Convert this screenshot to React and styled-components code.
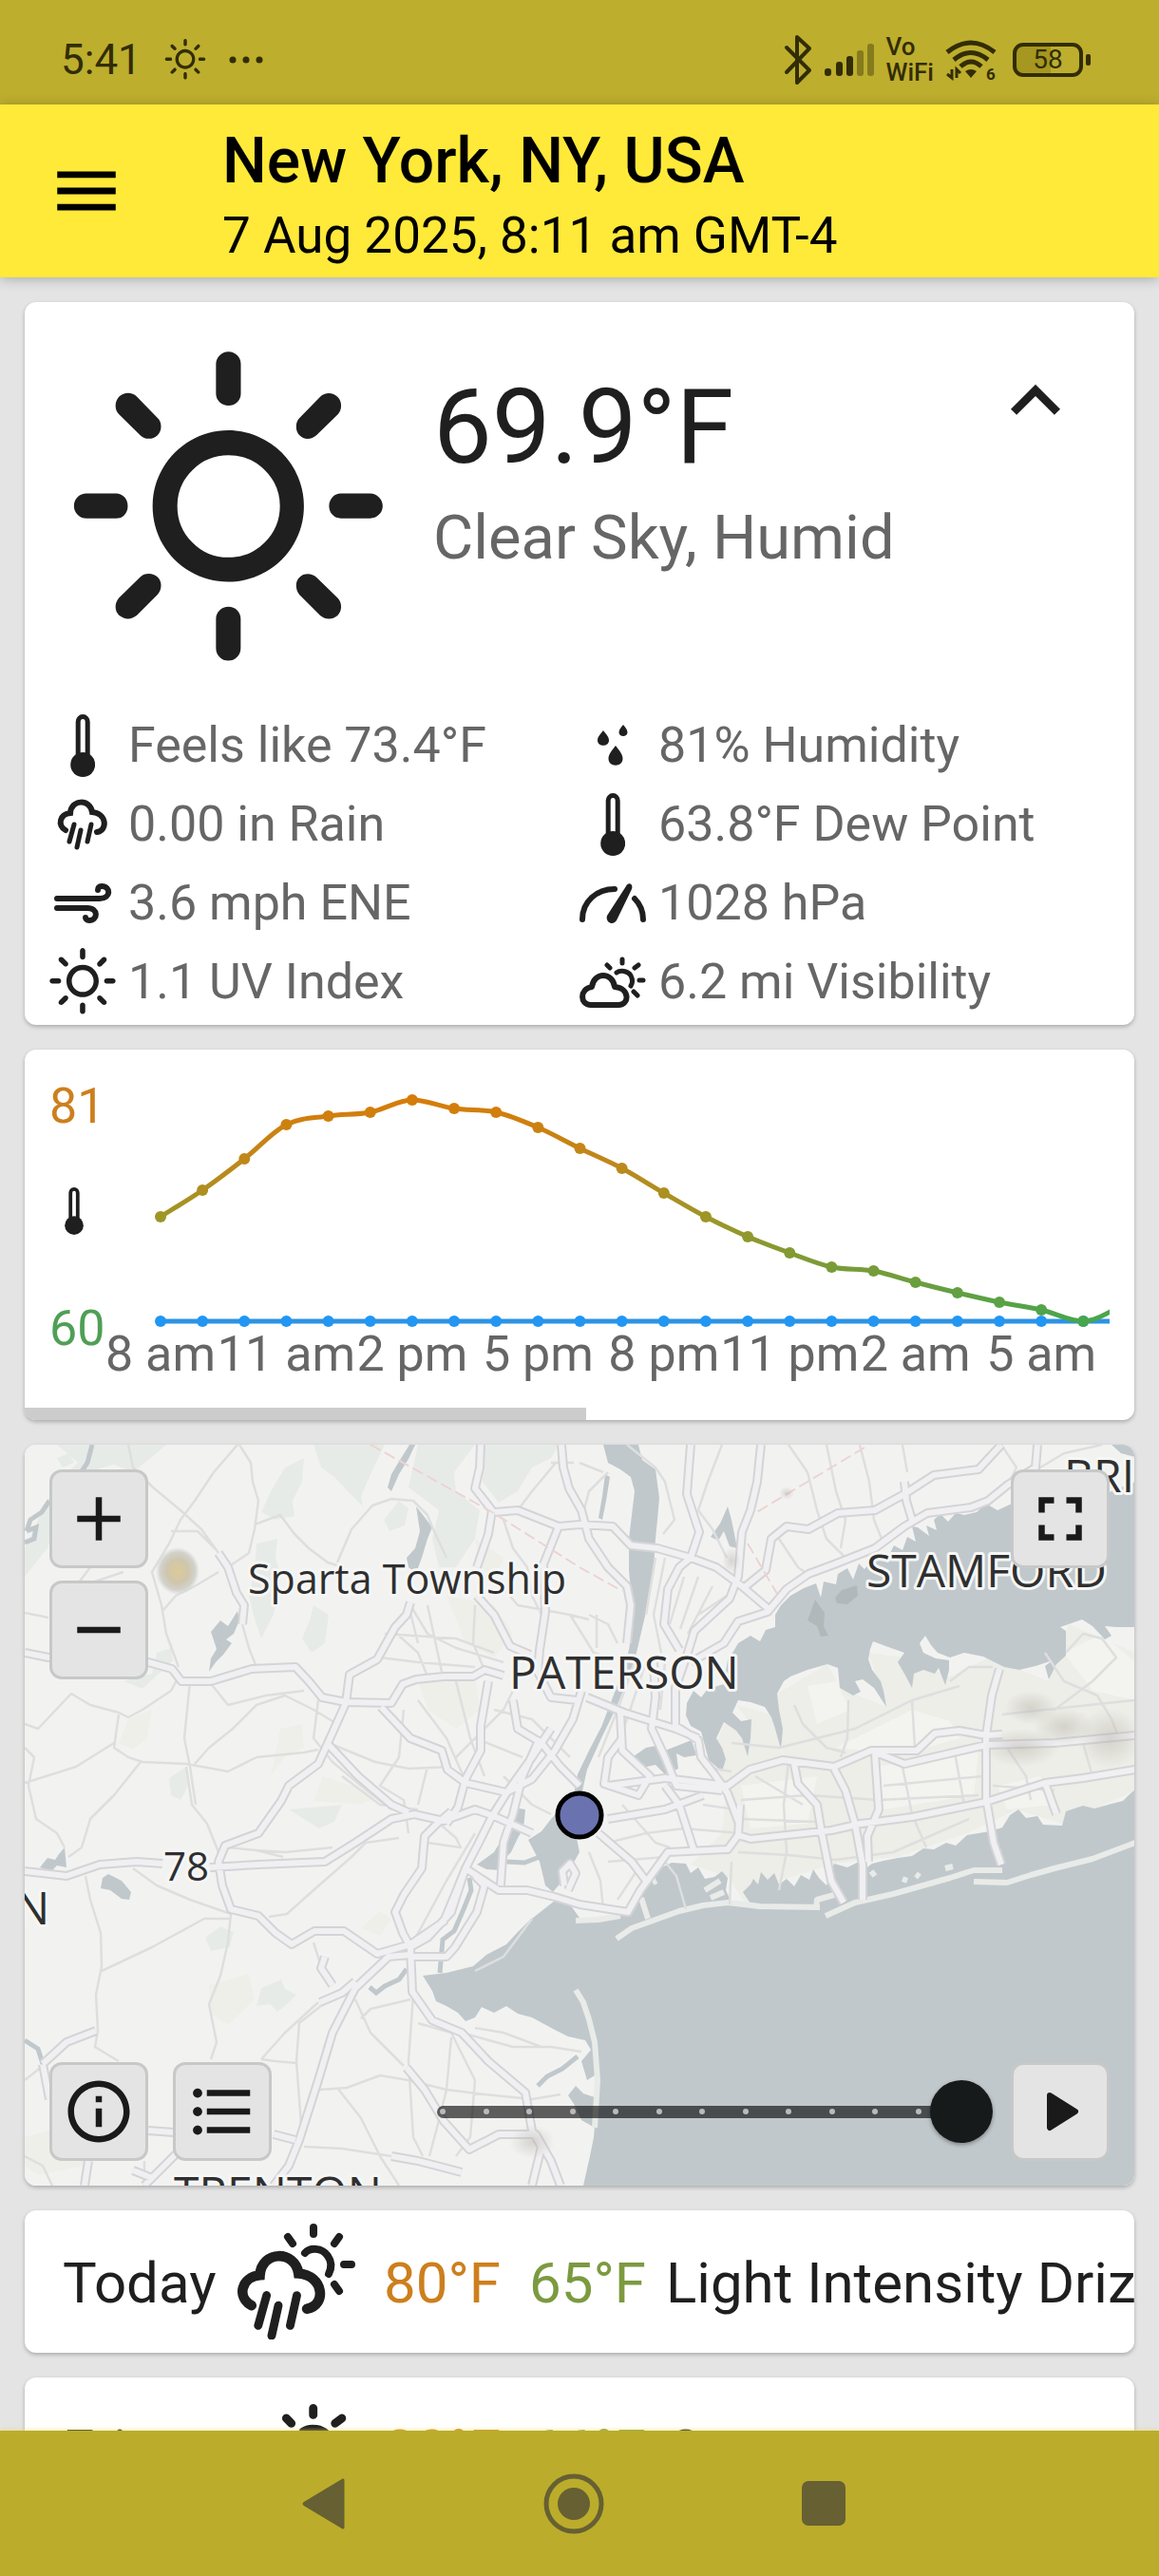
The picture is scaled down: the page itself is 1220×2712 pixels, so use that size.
import React, { useState } from "react";
import styled, { createGlobalStyle } from "styled-components";
import * as MdIcons from "react-icons/md";
import * as WiIcons from "react-icons/wi";

const GlobalStyle = createGlobalStyle`
  * {
    box-sizing: border-box;
  }
  body {
    margin: 0;
    background: #e4e4e4;
    font-family: Roboto, "Liberation Sans", sans-serif;
    color: #1f1f1f;
  }
`;

const Page = styled.div`
  display: flex;
  flex-direction: column;
  height: 100vh;
  overflow: hidden;
`;

const StatusBar = styled.div`
  flex: none;
  display: flex;
  justify-content: space-between;
  align-items: center;
  height: 110px;
  padding: 16px 72px 0 64px;
  background: #bdae2e;
  color: #322d05;
`;

const StatusGroup = styled.div`
  display: flex;
  align-items: center;
  gap: ${(p) => p.$gap}px;
`;

const Clock = styled.span`
  font-size: 44px;
  line-height: 52px;
`;

const VoWifi = styled.span`
  display: flex;
  flex-direction: column;
  font-size: 26px;
  line-height: 27px;
  font-weight: 500;
`;

const BatteryBox = styled.span`
  display: flex;
  align-items: center;
  margin-left: 5px;
`;

const Battery = styled.span`
  display: flex;
  align-items: center;
  justify-content: center;
  width: 74px;
  height: 36px;
  border: 4px solid #322d05;
  border-radius: 11px;
  background: linear-gradient(90deg, #a5971f 55%, transparent 55%);
  font-size: 28px;
  line-height: 28px;
`;

const BatteryTip = styled.span`
  width: 5px;
  height: 12px;
  margin-left: 3px;
  border-radius: 2px;
  background: #322d05;
`;

const AppBar = styled.header`
  flex: none;
  display: flex;
  align-items: center;
  gap: 102px;
  height: 182px;
  padding: 0 50px;
  background: #ffe939;
  color: #000;
  box-shadow: 0 2px 12px rgba(0, 0, 0, 0.25);
  z-index: 1;
`;

const Heading = styled.div`
  padding-top: 8px;
`;

const PlainButton = styled.button`
  display: flex;
  padding: 0;
  border: 0;
  background: none;
  color: inherit;
`;

const Title = styled.h1`
  margin: 0 0 9px;
  font-size: 66px;
  line-height: 76px;
  font-weight: 500;
`;

const Subtitle = styled.div`
  font-size: 53px;
  line-height: 62px;
`;

const Content = styled.main`
  flex: 1;
  display: flex;
  flex-direction: column;
  gap: 26px;
  min-height: 0;
  padding: 26px 26px 0;
  overflow: hidden;
`;

const Card = styled.section`
  flex: none;
  border-radius: 12px;
  background: #fff;
  overflow: hidden;
  box-shadow: 0 2px 4px rgba(0, 0, 0, 0.25);
`;

const Hero = styled.div`
  display: flex;
  height: 423px;
  padding: 0 52px 0 26px;
`;

const HeroIcon = styled.div`
  display: flex;
  align-items: center;
  justify-content: center;
  width: 376px;
  margin-right: 28px;
  padding-top: 18px;

  svg {
    flex: none;
  }
`;

const HeroText = styled.div`
  flex: 1;
  padding-top: 66px;
`;

const Temperature = styled.div`
  font-size: 110px;
  line-height: 132px;
`;

const Condition = styled.div`
  margin-top: 12px;
  font-size: 65px;
  line-height: 76px;
  color: #666;
`;

const CollapseButton = styled(PlainButton)`
  align-self: flex-start;
  margin-top: 52px;
`;

const Details = styled.ul`
  display: grid;
  grid-template-columns: 1fr 1fr;
  margin: 0;
  padding: 2px 26px 4px;
  list-style: none;
`;

const Detail = styled.li`
  display: flex;
  align-items: center;
  gap: 13px;
  height: 83px;
  font-size: 52px;
  color: #666;
`;

const DetailIcon = styled.span`
  display: flex;
  align-items: center;
  justify-content: center;
  width: 70px;
  height: 83px;
  color: #1f1f1f;

  svg {
    flex: none;
  }
`;

const ChartBody = styled.div`
  display: flex;
  gap: 1px;
  height: 377px;
  padding: 0 26px;
`;

const Axis = styled.div`
  display: flex;
  flex-direction: column;
  justify-content: space-between;
  width: 56px;
  padding: 30px 0 53px;
  font-size: 52px;
  line-height: 60px;
`;

const AxisValue = styled.span`
  color: ${(p) => p.$color};
`;

const AxisIcon = styled.span`
  display: flex;
  justify-content: center;
  width: 52px;
  padding-bottom: 14px;
`;

const ChartSvg = styled.svg`
  flex: 1;
  min-width: 0;
  height: 377px;
  font-size: 52px;
  fill: #666;
`;

const ScrollTrack = styled.div`
  height: 13px;
`;

const ScrollThumb = styled.div`
  width: 50.6%;
  height: 100%;
  background: #ccc;
`;

const MapCard = styled(Card)`
  display: grid;
  height: 780px;
`;

const MapSvg = styled.svg`
  grid-area: 1 / 1;
  width: 100%;
  height: 780px;
  background: #f2f3f1;
  font-family: "Open Sans", "Noto Sans", sans-serif;
`;

const MapControls = styled.div`
  grid-area: 1 / 1;
  display: flex;
  flex-direction: column;
  justify-content: space-between;
  padding: 26px;
  z-index: 1;
`;

const ControlRow = styled.div`
  display: flex;
  justify-content: space-between;
  align-items: ${(p) => p.$align || "center"};
`;

const ButtonStack = styled.div`
  display: flex;
  flex-direction: ${(p) => (p.$vertical ? "column" : "row")};
  gap: ${(p) => (p.$vertical ? 13 : 26)}px;
`;

const MapButton = styled.button`
  display: flex;
  align-items: center;
  justify-content: center;
  width: 104px;
  height: 104px;
  padding: 0;
  border: 3px solid #c7c8c8;
  border-radius: 13px;
  background: #e4e4e4;
  color: #1a1a1a;
`;

const Slider = styled.div`
  display: grid;
  align-items: center;
  flex: 1;
  margin: 0 19px 0 147px;
`;

const SliderDots = styled.div`
  grid-area: 1 / 1;
  display: flex;
  align-items: center;
  justify-content: space-between;
  height: 13px;
  margin: 0 27px;
  padding: 0 3px;
  border-radius: 7px;
  background: rgba(0, 0, 0, 0.62);
`;

const SliderDot = styled.span`
  width: 6px;
  height: 6px;
  border-radius: 50%;
  background: #b9bcbe;
`;

const SliderInput = styled.input`
  grid-area: 1 / 1;
  width: 100%;
  height: 66px;
  margin: 0;
  appearance: none;
  background: transparent;

  &::-webkit-slider-thumb {
    appearance: none;
    width: 66px;
    height: 66px;
    border-radius: 50%;
    background: #171a1a;
    box-shadow: 0 2px 4px rgba(0, 0, 0, 0.35);
  }
`;

const DayRow = styled.div`
  display: flex;
  align-items: center;
  height: 150px;
  padding: 0 0 0 40px;
  font-size: 60px;
  line-height: 70px;
  white-space: nowrap;

  > span {
    flex: none;
  }
`;

const DayName = styled.span`
  width: 160px;
  padding-top: 4px;
`;

const DayIcon = styled.span`
  display: flex;
  align-items: center;
  justify-content: center;
  width: 172px;
  margin-right: 6px;
`;

const DayTemp = styled.span`
  width: ${(p) => p.$width}px;
  padding-top: 4px;
  color: ${(p) => p.$color};
`;

const DayText = styled.span`
  padding-top: 4px;
`;

const NavBar = styled.nav`
  flex: none;
  display: flex;
  align-items: center;
  justify-content: center;
  gap: 208px;
  height: 153px;
  padding-right: 12px;
  background: #bbac2b;
  color: #666033;
  box-shadow: 0 -1px 4px rgba(230, 220, 100, 0.6);
  z-index: 1;
`;

const ThermometerIcon = ({ height }) => (
  <svg width={height * 0.4} height={height} viewBox="0 0 26 66" aria-hidden="true">
    <path
      d="M8 44V8a5 5.500 0 0 1 10 0V44"
      fill="none"
      stroke="currentColor"
      strokeWidth="5"
    />
    <circle cx="13" cy="53" r="13" fill="currentColor" />
  </svg>
);

const GaugeIcon = () => (
  <svg width="70" height="42" viewBox="0 14 70 42" aria-hidden="true">
    <g fill="none" stroke="currentColor" strokeWidth="6" strokeLinecap="round">
      <path d="M3 52C3 33 18 20 37 20" />
      <path d="M58 30C64 36 67 43 67 52" />
    </g>
    <path
      d="M49 17C51 12 57 14 55 20L39 53C35 59 27 55 29 48Z"
      fill="currentColor"
    />
  </svg>
);

const WindIcon = () => (
  <svg width="62" height="42" viewBox="0 0 62 42" aria-hidden="true">
    <path
      d="M4 16H49C61 16 61 3 51 3C48 3 47 5 47 7M4 26H36C48 26 47 39 38 39C35 39 34 37 34 36"
      fill="none"
      stroke="currentColor"
      strokeWidth="6"
      strokeLinecap="round"
    />
  </svg>
);

// teardrop with its tip at (x, y)
const drop = (x, y, w, h) =>
  `M${x} ${y}C${x + w * 0.2} ${y + h * 0.2} ${x + w / 2} ${y + h * 0.4} ${x + w / 2} ${
    y + h * 0.66
  }C${x + w / 2} ${y + h * 1.1} ${x - w / 2} ${y + h * 1.1} ${x - w / 2} ${
    y + h * 0.66
  }C${x - w / 2} ${y + h * 0.4} ${x - w * 0.2} ${y + h * 0.2} ${x} ${y}Z`;

const HumidityIcon = () => (
  <svg width="32" height="44" viewBox="0 0 32 44" aria-hidden="true">
    <path
      d={drop(6, 6, 12, 16) + drop(27, 0, 9, 12) + drop(19, 22, 15, 21)}
      fill="currentColor"
    />
  </svg>
);

const rainCloud = "M10 34C1 29 4 17 15 16C16 1 36 1 38 15C53 16 55 34 43 36";
const rainStreaks = "M19 28L14 46M26 34L22 52M37 28L33 46";

const RainIcon = () => (
  <svg width="56" height="56" viewBox="0 0 56 56" aria-hidden="true">
    <g fill="none" stroke="currentColor" strokeLinecap="round">
      <path d={rainCloud} strokeWidth="6" />
      <path d={rainStreaks} strokeWidth="5" />
    </g>
  </svg>
);

const DayRainIcon = () => (
  <svg width="124" height="122" viewBox="0 0 124 122" aria-hidden="true">
    <g fill="none" stroke="currentColor" strokeLinecap="round">
      <path
        d="M71 31C76 25 89 25 95 34C100 41 99 47 96 53M80 4V11M53 14L58 21M107 14L102 21M112 43H120M102 64L107 71"
        strokeWidth="8"
      />
      <g transform="translate(-3 26) scale(1.77)">
        <path d={rainCloud} strokeWidth="6" />
        <path d={rainStreaks} strokeWidth="5" />
      </g>
    </g>
  </svg>
);

const DayCloudIcon = ({ width }) => (
  <svg width={width} viewBox="0 0 70 54" aria-hidden="true">
    <g fill="none" stroke="currentColor" strokeLinecap="round" strokeLinejoin="round">
      <path
        d="M12 51C0 51 0 34 13 32C15 16 35 16 37 32C53 33 53 51 41 51Z"
        strokeWidth="6"
      />
      <path
        d="M39 17C43 14 51 15 54 20C56 24 56 28 54 31M45 3V7M29 9L32 12M62 9L58 12M63 25H67M57 37L61 41"
        strokeWidth="5"
      />
    </g>
  </svg>
);

const details = [
  { icon: <ThermometerIcon height={66} />, text: "Feels like 73.4°F" },
  { icon: <HumidityIcon />, text: "81% Humidity" },
  { icon: <RainIcon />, text: "0.00 in Rain" },
  { icon: <ThermometerIcon height={66} />, text: "63.8°F Dew Point" },
  { icon: <WindIcon />, text: "3.6 mph ENE" },
  { icon: <GaugeIcon />, text: "1028 hPa" },
  { icon: <WiIcons.WiDaySunny size={98} />, text: "1.1 UV Index" },
  { icon: <DayCloudIcon width={70} />, text: "6.2 mi Visibility" },
];

const temps = [
  176, 148, 115, 79, 70, 66, 53, 62, 66, 82, 104, 125, 151, 176, 197, 214, 229,
  233, 245, 256, 266, 274, 286, 268,
];
const hours = ["8 am", "11 am", "2 pm", "5 pm", "8 pm", "11 pm", "2 am", "5 am"];
const hourX = (i) => 60 + i * 44.15;

// smooth line through all points, tangents follow the neighbours
const linePath = (ys) =>
  ys.reduce((d, y, i) => {
    if (i === 0) return `M${hourX(0)} ${y}`;
    const slope = (k) => {
      if (k === 0 || k === ys.length - 1) return 0;
      const a = ys[k] - ys[k - 1];
      const b = ys[k + 1] - ys[k];
      return a * b <= 0 ? 0 : (a + b) / 2;
    };
    const s0 = i === 1 ? y - ys[0] : slope(i - 1);
    const s1 = i === ys.length - 1 ? y - ys[i - 1] : slope(i);
    return `${d}C${hourX(i - 1) + 14.7} ${ys[i - 1] + s0 / 3} ${hourX(i) - 14.7} ${
      y - s1 / 3
    } ${hourX(i)} ${y}`;
  }, "");

const HourlyChart = () => (
  <ChartSvg role="img" aria-label="Hourly temperature">
    <defs>
      <linearGradient id="heat" gradientUnits="userSpaceOnUse" x1="0" y1="53" x2="0" y2="286">
        <stop offset="0" stopColor="#d67c08" />
        <stop offset="0.25" stopColor="#c2861a" />
        <stop offset="0.53" stopColor="#9e9626" />
        <stop offset="0.78" stopColor="#759c3a" />
        <stop offset="1" stopColor="#46a64e" />
      </linearGradient>
    </defs>
    <line x1={hourX(0)} x2="1200" y1="286" y2="286" stroke="#2d93e3" strokeWidth="5" />
    {temps.map((t, i) => (
      <circle key={i} cx={hourX(i)} cy="286" r="6" fill="#2196f3" />
    ))}
    <path d={linePath(temps)} fill="none" stroke="url(#heat)" strokeWidth="5" />
    <g fill="url(#heat)">
      {temps.map((t, i) => (
        <circle key={i} cx={hourX(i)} cy={t} r="6" />
      ))}
    </g>
    {hours.map((hour, i) => (
      <text key={hour} x={hourX(i * 3)} y="338" textAnchor="middle">
        {hour}
      </text>
    ))}
  </ChartSvg>
);

const water = [
  // ocean and lower bay
  "M445 2080L470 2077L498 2070L512 2058L533 2047L545 2034L556 2023L570 2012L584 2001L600 2005L610 2019L630 2022L653 2016L668 2011L674 1995L680 1980L688 1970L707 1961L722 1962L727 1972L735 1966L742 1978L752 1976L760 1970L766 1977L764 1990L770 2003L790 2004L782 1992L790 1984L793 1978L798 1984L801 1971L808 1979L815 1972L820 1984L828 1978L836 1986L843 1974L852 1979L856 1968L862 1977L870 1985L878 1962L892 1966L904 1960L910 1968L918 1962L930 1959L945 1956L960 1954L972 1946L983 1947L996 1940L1006 1943L1018 1932L1030 1930L1042 1928L1055 1924L1063 1911L1072 1905L1080 1914L1092 1912L1098 1921L1118 1922L1122 1907L1140 1901L1152 1904L1170 1899L1182 1896L1188 1890L1195 1884V2301H614L621 2270L625 2250L629 2200V2183L618 2190L612 2170L622 2158L616 2148L598 2144L584 2137L560 2124L545 2120L533 2112L520 2119L507 2113L500 2124L490 2128L482 2119L470 2112L459 2107L455 2096Z",
  // long island sound
  "M1195 1560L1150 1578L1100 1580L1065 1583L1050 1590L1038 1583L1028 1592L1015 1595L1006 1593L998 1602L990 1594L983 1600L986 1611L975 1606L978 1617L966 1608L960 1607L964 1623L955 1618L950 1632L941 1627L933 1643L920 1640L910 1652L904 1646L898 1663L892 1651L882 1657L880 1668L867 1665L864 1682L859 1667L846 1672L832 1680L822 1690L816 1700V1713L806 1716L800 1728L790 1722L777 1730L770 1742L766 1747L764 1760L762 1773L745 1778L738 1787L730 1780L723 1793L722 1806L727 1817L738 1823L742 1838L746 1853L760 1865L764 1852L760 1840L754 1830L762 1813L775 1822L781 1830L787 1849L790 1830L791 1810L780 1812L771 1803L777 1790L790 1792L805 1797L812 1808L816 1820L822 1842L824 1820L820 1800L818 1783L825 1770L832 1765L850 1758L871 1752L882 1756L884 1777L898 1785L906 1781L900 1770L908 1768L920 1777L933 1797L930 1780L927 1770L918 1758L914 1747L916 1736L919 1728L935 1734L952 1740L945 1750L952 1762L960 1777L962 1762L972 1758L984 1762L988 1756L995 1774L999 1758V1748L985 1746L972 1740L968 1730L974 1722L980 1732L987 1740L1000 1745L1015 1740L1035 1744L1057 1755L1073 1758L1090 1754L1108 1748L1100 1754L1104 1768L1112 1752L1122 1743V1717L1116 1713L1139 1705L1150 1712L1163 1726L1170 1722L1163 1712L1175 1713L1195 1713Z",
  // hudson
  "M635 1521H672L676 1537L690 1547L694 1577L692 1600L690 1620L688 1653L680 1697L670 1740L660 1770L649 1797L633 1830L618 1863L612 1890H604L608 1868L620 1843L633 1818L645 1787L655 1760L662 1737L668 1697L664 1675L662 1653V1620L665 1595L668 1570L664 1555L653 1547L640 1540Z",
  // upper bay, newark bay
  "M600 1895L606 1930L610 1950L600 1968L592 1980L582 1992L574 1985L568 1960L556 1937L570 1928L580 1915Z",
  "M541 1903L553 1905L551 1925L545 1935L538 1950L533 1955L527 1969L512 1968L502 1963L520 1950L532 1930L541 1918Z",
  // inlets by the airport
  "M664 1851L680 1840L690 1838L700 1843L728 1832L733 1848L720 1850L712 1846L714 1862L700 1868L690 1858L676 1861L668 1857Z",
  // reservoirs and lakes
  "M431 1521H437L430 1536L420 1552L412 1570L408 1566L412 1552L421 1537Z",
  "M438 1586L446 1596L455 1608L450 1620L444 1640L438 1656L430 1650L428 1640L437 1630L442 1612Z",
  "M250 1696L252 1706L246 1720L238 1726L244 1730L235 1742L227 1750L220 1760L222 1746L228 1736L222 1718L232 1706L240 1712Z",
  "M108 1977L114 1973L128 1980L138 1992L136 2000L128 1999L116 1990L106 1988Z",
  "M42 1966L50 1956L58 1958L62 1952L68 1945L70 1966L60 1964L54 1970Z",
  "M766 1586L770 1600L774 1620L776 1630L768 1628L762 1612L756 1622L748 1618L758 1604Z",
  "M637 1552L642 1555L638 1580L634 1600L630 1598L634 1575Z",
  "M1170 1521H1195V1534L1180 1530Z",
  "M598 2206L606 2196L614 2204L626 2208V2240L612 2232L604 2215Z",
];

const rivers = [
  "M97 1521L92 1540L84 1552M52 1580L44 1592L32 1600L28 1612M28 1612L38 1608L36 1620L26 1624",
  "M494 1977L496 1990L488 2010L478 2033L466 2042L463 2077",
  "M428 2073L420 2084L405 2091L396 2098L389 2092",
  "M533 1960L552 1961L568 1955",
  "M26 2148L40 2157L46 2176L52 2205",
  "M608 2165L592 2178L576 2186L566 2196",
];

const parks = [
  "M60 1521H175L160 1534L140 1550L120 1542L98 1548L80 1575L60 1600L50 1630L30 1655L26 1660V1630L40 1600L60 1560L82 1540Z",
  "M330 1521H405L392 1548L380 1575L382 1586L366 1570L352 1555L338 1545Z",
  "M440 1521H500L478 1550L480 1570L505 1590L500 1620L480 1650L462 1650L455 1620L462 1590L430 1566Z",
  "M510 1521H588L580 1535L560 1545L545 1570L525 1582L508 1560Z",
  "M300 1545L320 1535L318 1560L308 1580L310 1596L290 1600L275 1592L285 1570Z",
  "M270 1625L292 1620L290 1640L296 1660L288 1700L275 1725L268 1705L262 1680L268 1650Z",
  "M330 1690L346 1700L342 1730L328 1740L318 1725L326 1706Z",
  "M404 1600L420 1580L430 1588L426 1606L410 1612Z",
  "M304 1905L360 1900L352 1918L336 1925L318 1914Z",
  "M216 2040L232 2028L246 2034L242 2050L222 2054Z",
  "M275 2093L296 2084L300 2094L312 2100L302 2110L292 2118L284 2110L270 2112Z",
  "M130 1770L160 1762L165 1740L180 1735L182 1748L150 1778Z",
  "M178 1872L196 1860L198 1880L190 1895L180 1890Z",
  "M60 1535L72 1530L78 1540L66 1545Z",
];

const suburbs = [
  "M135 1810L160 1800L155 1830L140 1842L125 1835Z",
  "M295 1820L318 1815L320 1840L300 1850L285 1870Z",
  "M470 1680L520 1690L540 1720L520 1745L490 1730Z",
  "M500 1620L530 1640L522 1660L505 1650Z",
  "M220 2090L262 2078L268 2105L240 2132L222 2120Z",
  "M380 2030L400 2012L412 2020L400 2038Z",
  "M440 1770L500 1765L505 1800L480 1820L450 1800Z",
  "M340 1870L400 1890L380 1900L330 1896Z",
  "M26 2250L60 2240L100 2260L90 2280L40 2290L26 2280Z",
];

const island =
  "M746 1856L762 1815L790 1815L775 1795L812 1805L824 1850L818 1783L871 1752L884 1777L933 1797L914 1740L952 1745L1000 1765L1040 1745L1104 1770L1125 1710L1195 1740V1885L1118 1920L1070 1905L1018 1930L945 1955L878 1962L820 1980L785 2005L766 1975L727 1963L760 1930L765 1880Z";

const islandLight = [
  "M880 1840L960 1800L1000 1812L1010 1830L940 1850L900 1842Z",
  "M1120 1740L1160 1720L1195 1750V1790L1150 1780Z",
  "M780 1880L860 1870L850 1920L790 1925Z",
  "M920 1860L1030 1845L1025 1890L930 1905Z",
  "M1050 1880L1095 1870L1110 1900L1060 1905Z",
  "M850 1775L880 1770L895 1800L860 1815Z",
];

const highways = [
  "M26 1740L51 1745L156 1750L181 1757L191 1770L222 1770L265 1757L311 1755L325 1770L339 1787L364 1792L412 1793L424 1773L438 1768L467 1765L498 1765L510 1758L530 1764",
  "M432 1687L428 1700L416 1713L397 1747L368 1763L364 1793L346 1833L335 1857L304 1880L296 1896L272 1930L237 1943L230 1960L234 1985L243 2010L272 2017L290 2035L307 2047L331 2033L362 2033L397 2057L432 2047L467 2023L480 1992L490 1967L504 1940L518 1912L535 1885L560 1850L580 1820",
  "M230 1635L240 1650L249 1677L257 1690L255 1710",
  "M506 1521L505 1545L500 1567L518 1590L514 1615L502 1650",
  "M502 1680L520 1700L537 1733L558 1742",
  "M591 1521L593 1545L599 1567L612 1590L620 1620L640 1650L660 1670L664 1690L660 1730",
  "M521 1592L545 1590L588 1607L610 1605L645 1607L664 1627L692 1630L727 1640L754 1650L781 1670L808 1693",
  "M588 1607L572 1647L574 1697L568 1737L566 1760L580 1787L607 1790",
  "M727 1521L723 1573L736 1613L727 1640L715 1650L703 1673L699 1710L715 1737",
  "M801 1521L797 1560L790 1590L781 1613L777 1660L768 1683L731 1717L723 1743L711 1777V1817L735 1832L738 1850L752 1868L766 1888L778 1920",
  "M1054 1521L1030 1547L983 1553L952 1573L921 1590L882 1593L851 1610L828 1607L812 1620L806 1653L785 1670",
  "M1092 1521L1090 1545L1061 1563L1040 1580L1022 1587L976 1593L952 1607L921 1630L878 1647L851 1657L828 1673L808 1697L777 1707L762 1730L727 1750",
  "M952 1560L954 1580L960 1600",
  "M401 1797L432 1830L465 1843L471 1863L490 1877L533 1887L560 1873L584 1843L603 1810L612 1780",
  "M346 1837L377 1870L412 1900L430 1908",
  "M514 1770L506 1817V1843L490 1873L482 1903L470 1920",
  "M26 1970L70 1975L105 1963L144 1960L171 1962M221 1966L272 1963L342 1960L374 1940L412 1915L436 1910L467 1917L500 1905L520 1912L560 1930",
  "M475 1907L460 1920L447 1933L444 1967L425 1995L416 2013L424 2035L432 2050L434 2097L455 2127L486 2140L514 2170L553 2203L560 2243L570 2260L560 2301",
  "M432 2058L409 2060L374 2093L350 2140L335 2190L315 2253L304 2280L288 2301",
  "M490 1967L475 2013L450 2040L432 2050",
  "M500 1975L510 1985L502 2013L479 2050L470 2060L432 2060",
  "M490 1967L525 1990L555 1990L584 1997L610 2005L661 2013L674 1990L690 1968L703 1950L766 1947L777 1932L790 1936L828 1932L875 1927L906 1920L960 1913L999 1905L1038 1897L1100 1877L1140 1872L1195 1863",
  "M640 1880L700 1872L766 1880L789 1863L824 1853L878 1860L917 1843L952 1857L1038 1837L1110 1835L1195 1827",
  "M917 1843L965 1843L984 1825L1010 1822L1038 1827L1055 1826",
  "M1052 1757L1044 1785L1038 1827V1893L1046 1940L1054 1963",
  "M836 1857L840 1878L860 1900L865 1930L875 1980L888 2003",
  "M878 1862L890 1885L900 1920L908 1963V2000",
  "M921 1847L925 1905L913 1933L914 1960",
  "M700 1880L715 1900L731 1950M779 1900L777 1932",
  "M1100 1877L1112 1910",
  "M618 1787L657 1803L711 1820L735 1830M653 1803L655 1843L684 1870L672 1890L636 1878L640 1850L655 1830",
  "M688 1750L690 1787L686 1820L700 1850L712 1880L760 1885",
  "M540 1790L545 1820L570 1835L590 1860L610 1880M568 1830L550 1870L540 1910L530 1940L527 1985",
  "M45 2173L70 2150L101 2138M45 2173L52 2210",
  "M156 2243L183 2245M288 2247L311 2253M89 2301L93 2275M160 2293L183 2270L194 2260M152 2301L160 2293L140 2285",
  "M412 2270L440 2275L486 2287",
  "M428 2177L447 2200L467 2233L494 2263L525 2247L564 2247L580 2275L590 2301",
  "M337 2108L360 2098L374 2086M342 2060L338 2072L350 2090",
  "M594 1985L592 1970L600 1962L606 1972L598 1990",
  "M640 1915L700 1905L740 1890M630 1930L665 1960L680 1980",
];

const roads = [
  "M250 1521L225 1550L205 1580L190 1600L178 1625L160 1655L170 1690L175 1720L188 1755",
  "M135 1521L140 1545L160 1565L190 1590L212 1610L230 1635",
  "M180 1612L208 1612L228 1632",
  "M252 1521L264 1540L266 1560L272 1580L268 1610L262 1635L240 1650",
  "M268 1605L295 1595L310 1615L325 1630L345 1645L355 1648",
  "M355 1645L370 1610L392 1585L412 1578L435 1580L450 1595L456 1610L470 1640",
  "M255 1710L262 1735L270 1755M230 1655L205 1670L185 1680L172 1695",
  "M26 1698L51 1703M95 1650L80 1670L100 1665L130 1655",
  "M26 1815L40 1820L75 1783L95 1795L125 1803L135 1808L150 1800L180 1780L188 1765",
  "M125 1805L120 1840L135 1850L150 1855L196 1857L240 1865L270 1850L320 1845L335 1842",
  "M205 1857L220 1840L245 1820L270 1795L300 1785L330 1800L355 1815",
  "M200 1770L194 1830L200 1860L206 1900M26 1840L36 1850L30 1880L38 1915L60 1930L68 1945",
  "M148 1855L120 1890L95 1915L86 1945L72 1955M26 1877L80 1860L120 1835",
  "M196 1860L202 1900L218 1920L230 1950M220 1770L240 1795L280 1785L320 1780",
  "M335 1790L330 1830L350 1855L380 1880L412 1905M346 1835L395 1855L430 1862L475 1860",
  "M412 1715L440 1740L450 1765M432 1690L450 1720L480 1735L530 1750M500 1690L498 1730L510 1758",
  "M440 1790L470 1830L490 1875M480 1770L495 1830L510 1870M425 1800L420 1850L400 1880L425 1895L430 1930",
  "M140 1967L165 1985L200 2000L243 2015L240 2045L232 2080L220 2110L228 2150L222 2168",
  "M243 2020L215 2020L160 2050L107 2075M90 1975L95 2000L106 2035L107 2070L101 2100L103 2138L100 2155L125 2170",
  "M283 2018L302 2015L330 1990L370 1955L385 1940L420 1935",
  "M240 1945L270 1948L300 1950L350 1945M270 1948L298 1955",
  "M275 2168L300 2140L335 2108M318 2250L312 2170L315 2130L340 2110M275 2168L290 2170L312 2172",
  "M374 2105L390 2140L425 2175M380 2125L390 2115L432 2105M435 2100L430 2170L435 2250L445 2270",
  "M440 2130L475 2140L500 2190L495 2250L480 2270M486 2140L540 2155L580 2155L612 2160",
  "M500 2135L530 2140L570 2155M336 2200L365 2198L400 2185L430 2190L470 2200L510 2205L560 2210L590 2205",
  "M355 2198L380 2230L400 2270L420 2301M320 2260L360 2262L412 2270M475 2145L470 2200L460 2240L452 2270",
  "M26 2190L45 2175M26 2270L45 2280L55 2301M152 2275L152 2301",
  "M330 2045L338 2070M432 2050L470 1980L500 1930M450 1940L485 1945L480 1935L465 1922",
  "M500 2075L530 2060L560 2020M585 1540L560 1570L545 1590M604 1540L580 1540",
  "M530 1600L540 1630L555 1650L560 1680L570 1700M520 1660L545 1690L600 1700L620 1705",
  "M610 1540L635 1550M612 1600L620 1570L640 1550M660 1521L690 1545L700 1560L710 1600L698 1615",
  "M760 1521L745 1560L735 1590L750 1610L765 1640M830 1521L850 1550L860 1590L870 1620L890 1640",
  "M870 1521L880 1570L890 1600L885 1630M905 1521L915 1560L920 1600L930 1625M950 1521L955 1550",
  "M1054 1521L1070 1545L1060 1565M820 1620L840 1650L850 1657M1090 1548L1120 1530L1160 1521",
  "M690 1640L680 1700M700 1640L688 1700L696 1740M720 1660L705 1710M735 1660L716 1715M750 1670L724 1720M765 1680L735 1700",
  "M620 1700L640 1710L650 1730M600 1700L625 1740L640 1745M628 1700V1735M670 1745L650 1800L630 1850M680 1750L660 1810L640 1860M700 1750L695 1800",
  "M836 1795L845 1815L870 1840L890 1845M893 1790L892 1830L885 1850M770 1835L820 1840L900 1820L960 1790L1010 1775",
  "M960 1790L963 1840M1055 1805L1100 1800L1195 1790M1100 1740L1120 1770L1155 1785L1170 1810L1178 1830",
  "M1122 1740L1140 1720L1160 1725L1175 1745L1150 1770L1110 1800M1000 1770L1020 1755L1045 1755",
  "M780 1895L850 1890L925 1895L1030 1890M780 1915L860 1918M777 1950L830 1953L880 1958L940 1950L1020 1915",
  "M950 1860L960 1910L975 1945M1005 1845L1015 1900M1060 1840L1080 1870L1085 1895M1140 1835L1150 1870",
  "M830 1855L825 1900L828 1950L820 1990M770 1960L768 2005M700 1960L712 1975L722 2010",
  "M640 1940L680 1930L720 1925L780 1930M640 1960L700 1955M655 1900L690 1940L705 1945M620 1950L632 1980L635 2010",
  "M670 1970L650 2000M740 1860L770 1865M740 1900L775 1905M795 1870L845 1900M930 1880L1035 1870M1045 1880L1110 1885",
  "M500 1830L550 1850M480 1850L530 1800L540 1780M520 1800L560 1810L600 1850M450 1860L440 1900M530 1870L560 1900L580 1910",
  "M400 1745L440 1750L500 1755M405 1720L480 1725L520 1740M430 1690L440 1730M450 1690L465 1760M360 1870L400 1900L440 1905",
];

const beaches = [
  "M649 2041L665 2030L690 2021L715 2012L740 2006L766 2003L800 2007L863 2008",
  "M869 2017L900 2003L940 1994L1000 1977L1025 1969L1055 1969",
  "M1025 1981L1060 1982L1085 1974L1110 1967L1150 1957L1195 1940",
  "M606 2095L614 2108L620 2126L626 2150L629 2190L626 2240",
  "M606 2022L630 2021L653 2017M675 1998L682 2020M859 2010L860 2000L878 1995",
  "M917 1970L921 1975M950 1978L955 1980M964 1973L968 1976M995 1967L1003 1965M687 1982L691 1980M742 1990L758 1980M748 1998L762 1992",
];

const MapDrawing = () => (
  <MapSvg
    viewBox="26 1521 1168 780"
    preserveAspectRatio="xMidYMid slice"
    role="img"
    aria-label="Rain radar map around New York"
  >
    <defs>
      <radialGradient id="shower">
        <stop offset="0" stopColor="#dccb98" />
        <stop offset="0.5" stopColor="#cfc6ad" />
        <stop offset="0.8" stopColor="#d2d2cc" />
        <stop offset="1" stopColor="#d2d2cc" stopOpacity="0" />
      </radialGradient>
      <radialGradient id="drizzle">
        <stop offset="0" stopColor="#b5afa8" stopOpacity="0.45" />
        <stop offset="1" stopColor="#b5afa8" stopOpacity="0" />
      </radialGradient>
    </defs>
    <path d={island} fill="#eceee7" />
    <path d={islandLight.join("")} fill="#f3f4ef" />
    <path d={parks.join("")} fill="#e7ebe8" />
    <path d={suburbs.join("")} fill="#eeefe9" />
    <path d={water.join("")} fill="#c0c8cc" />
    <path d={rivers.join("")} fill="none" stroke="#c0c8cc" strokeWidth="5" />
    <g fill="none" strokeLinejoin="round">
      <path d={beaches.join("")} stroke="#e9ebe8" strokeWidth="6" />
      <path d={roads.join("")} stroke="#dededf" strokeWidth="2.5" />
      <path d={highways.join("")} stroke="#d4d4d7" strokeWidth="10" />
      <path d={highways.join("")} stroke="#f0f0f2" strokeWidth="6" />
      <path
        d="M390 1521L518 1592L610 1650L655 1675M910 1524L795 1593M787 1625L818 1678"
        stroke="#edd3d2"
        strokeWidth="2"
        strokeDasharray="12 5"
      />
    </g>
    <ellipse cx="187" cy="1654" rx="23" ry="25" fill="url(#shower)" />
    <path d="M850 1706L858 1684L868 1698L867 1712L872 1722L864 1723L860 1712Z" fill="#b2b8b9" />
    <path d="M879 1682L886 1674L902 1669L903 1680L892 1689L881 1688Z" fill="#b2b8b9" />
    <g fill="url(#drizzle)">
      <ellipse cx="1085" cy="1798" rx="28" ry="18" />
      <ellipse cx="1120" cy="1818" rx="32" ry="20" />
      <ellipse cx="1168" cy="1830" rx="34" ry="32" />
      <ellipse cx="1075" cy="1840" rx="40" ry="20" />
      <ellipse cx="560" cy="2255" rx="24" ry="18" />
      <ellipse cx="770" cy="1643" rx="10" ry="14" />
      <ellipse cx="828" cy="1572" rx="8" ry="7" />
    </g>
    <g
      fill="#2f2f2f"
      stroke="#f5f6f5"
      strokeWidth="6"
      strokeLinejoin="round"
      paintOrder="stroke"
      fontSize="48"
    >
      <text x="261" y="1678" fontSize="43">Sparta Township</text>
      <text x="536" y="1778">PATERSON</text>
      <text x="912" y="1671">STAMFORD</text>
      <text x="1120" y="1571">BRI</text>
      <text x="172" y="1980" fontSize="42">78</text>
      <text x="16" y="2026">N</text>
      <text x="183" y="2326">TRENTON</text>
    </g>
    <circle cx="610" cy="1911" r="23" fill="#6a73b0" stroke="#000" strokeWidth="5" />
  </MapSvg>
);

const RadarMap = () => {
  const [frame, setFrame] = useState(12);

  return (
    <MapCard>
      <MapDrawing />
      <MapControls>
        <ControlRow $align="flex-start">
          <ButtonStack $vertical>
            <MapButton aria-label="Zoom in">
              <MdIcons.MdAdd size={78} />
            </MapButton>
            <MapButton aria-label="Zoom out">
              <MdIcons.MdRemove size={78} />
            </MapButton>
          </ButtonStack>
          <MapButton aria-label="Full screen">
            <MdIcons.MdFullscreen size={78} />
          </MapButton>
        </ControlRow>
        <ControlRow>
          <ButtonStack>
            <MapButton aria-label="Info">
              <MdIcons.MdInfoOutline size={78} />
            </MapButton>
            <MapButton aria-label="Layers">
              <MdIcons.MdFormatListBulleted size={78} />
            </MapButton>
          </ButtonStack>
          <Slider>
            <SliderDots>
              {Array.from({ length: 13 }, (_, i) => (
                <SliderDot key={i} />
              ))}
            </SliderDots>
            <SliderInput
              type="range"
              aria-label="Radar time"
              min="0"
              max="12"
              value={frame}
              onChange={(e) => setFrame(Number(e.target.value))}
            />
          </Slider>
          <MapButton aria-label="Play">
            <svg width="78" height="78" viewBox="0 0 78 78">
              <path
                d="M28 22L55 39L28 56Z"
                fill="currentColor"
                stroke="currentColor"
                strokeWidth="6"
                strokeLinejoin="round"
              />
            </svg>
          </MapButton>
        </ControlRow>
      </MapControls>
    </MapCard>
  );
};

const days = [
  {
    name: "Today",
    icon: <DayRainIcon />,
    high: "80°F",
    low: "65°F",
    text: "Light Intensity Drizzle",
  },
  {
    name: "Fri",
    icon: <DayCloudIcon width={124} />,
    high: "82°F",
    low: "66°F",
    text: "Overcast",
  },
];

const App = () => {
  return (
    <Page>
      <GlobalStyle />
      <StatusBar>
        <StatusGroup $gap={16}>
          <Clock>5:41</Clock>
          <WiIcons.WiDaySunny size={60} />
          <svg width="36" height="8" viewBox="0 0 36 8" fill="currentColor">
            <circle cx="4" cy="4" r="3.5" />
            <circle cx="18" cy="4" r="3.5" />
            <circle cx="32" cy="4" r="3.5" />
          </svg>
        </StatusGroup>
        <StatusGroup $gap={12}>
          <svg width="30" height="54" viewBox="0 0 30 54">
            <path
              d="M3 14L27 38L14 51V3L27 15L3 40"
              fill="none"
              stroke="currentColor"
              strokeWidth="4"
              strokeLinejoin="round"
              strokeLinecap="round"
            />
          </svg>
          <svg width="54" height="36" viewBox="0 0 54 36" fill="currentColor">
            <rect x="1" y="27" width="7" height="8" rx="3" />
            <rect x="13" y="20" width="7" height="15" rx="3" />
            <rect x="24" y="14" width="7" height="21" rx="3" />
            <g opacity="0.4">
              <rect x="35" y="8" width="7" height="27" rx="3" />
              <rect x="46" y="1" width="7" height="34" rx="3" />
            </g>
          </svg>
          <VoWifi>
            <span>Vo</span>
            <span>WiFi</span>
          </VoWifi>
          <svg width="54" height="44" viewBox="0 0 54 44">
            <g fill="none" stroke="currentColor" strokeWidth="5">
              <path d="M2 14Q27 -6 52 14" />
              <path d="M9 22Q27 7 45 22" />
              <path d="M16 29Q27 19 38 29" />
            </g>
            <path d="M21 34Q27 30 33 34L27 41Z" fill="currentColor" />
            <path
              d="M7 32V41L2 37M12 41V32L16 36"
              fill="none"
              stroke="currentColor"
              strokeWidth="3"
            />
            <text x="43" y="43" fontSize="17" fontWeight="700" fill="currentColor">
              6
            </text>
          </svg>
          <BatteryBox>
            <Battery>58</Battery>
            <BatteryTip />
          </BatteryBox>
        </StatusGroup>
      </StatusBar>

      <AppBar>
        <PlainButton aria-label="Menu">
          <MdIcons.MdMenu size={82} />
        </PlainButton>
        <Heading>
          <Title>New York, NY, USA</Title>
          <Subtitle>7 Aug 2025, 8:11 am GMT-4</Subtitle>
        </Heading>
      </AppBar>

      <Content>
        <Card>
          <Hero>
            <HeroIcon>
              <WiIcons.WiDaySunny size={459} />
            </HeroIcon>
            <HeroText>
              <Temperature>69.9°F</Temperature>
              <Condition>Clear Sky, Humid</Condition>
            </HeroText>
            <CollapseButton aria-label="Collapse">
              <MdIcons.MdKeyboardArrowUp size={104} />
            </CollapseButton>
          </Hero>
          <Details>
            {details.map(({ icon, text }) => (
              <Detail key={text}>
                <DetailIcon>{icon}</DetailIcon>
                {text}
              </Detail>
            ))}
          </Details>
        </Card>

        <Card>
          <ChartBody>
            <Axis>
              <AxisValue $color="#cd7f1d">81</AxisValue>
              <AxisIcon>
                <ThermometerIcon height={50} />
              </AxisIcon>
              <AxisValue $color="#4f9f55">60</AxisValue>
            </Axis>
            <HourlyChart />
          </ChartBody>
          <ScrollTrack>
            <ScrollThumb />
          </ScrollTrack>
        </Card>

        <RadarMap />

        {days.map((day) => (
          <Card key={day.name}>
            <DayRow>
              <DayName>{day.name}</DayName>
              <DayIcon>{day.icon}</DayIcon>
              <DayTemp $color="#cd7f1d" $width={153}>{day.high}</DayTemp>
              <DayTemp $color="#7b9a40" $width={144}>{day.low}</DayTemp>
              <DayText>{day.text}</DayText>
            </DayRow>
          </Card>
        ))}
      </Content>

      <NavBar>
        <PlainButton aria-label="Back">
          <svg width="46" height="54" viewBox="0 0 46 54">
            <path
              d="M43 2V52L3 28Q1 27 3 26Z"
              fill="currentColor"
              stroke="currentColor"
              strokeWidth="3"
              strokeLinejoin="round"
            />
          </svg>
        </PlainButton>
        <PlainButton aria-label="Home">
          <svg width="64" height="64" viewBox="0 0 64 64">
            <circle cx="32" cy="32" r="29" fill="none" stroke="currentColor" strokeWidth="5" />
            <circle cx="32" cy="32" r="17" fill="currentColor" />
          </svg>
        </PlainButton>
        <PlainButton aria-label="Recent apps">
          <svg width="46" height="47" viewBox="0 0 46 47">
            <rect width="46" height="47" rx="7" fill="currentColor" />
          </svg>
        </PlainButton>
      </NavBar>
    </Page>
  );
};

export default App;
